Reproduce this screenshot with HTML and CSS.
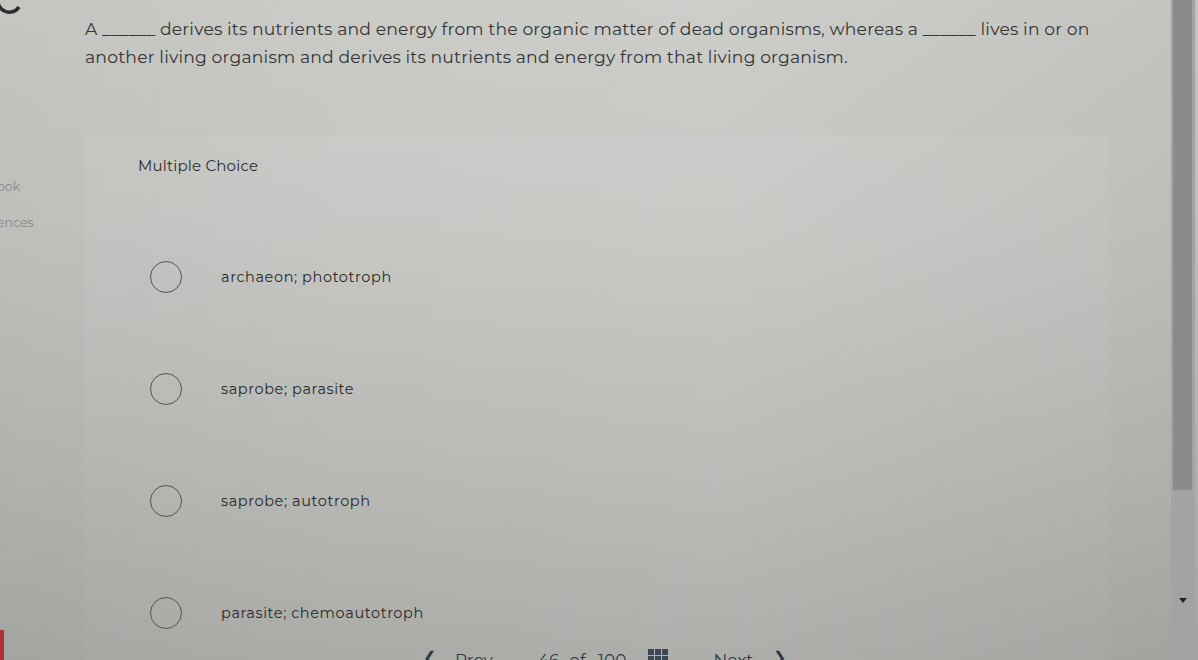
FILE: index.html
```
<!DOCTYPE html>
<html>
<head>
<meta charset="utf-8">
<link rel="stylesheet" href="styles.css">
</head>
<body>
<div class="screen">
  <aside class="sidebar">
    <svg class="logo-arc" width="26" height="20" viewBox="0 0 26 20"><path d="M1.5 -3 A11.5 11.5 0 0 0 22 7" fill="none" stroke="#2c2c2c" stroke-width="3.4"/></svg>
    <div class="side-link side-ook">ook</div>
    <div class="side-link side-ences">ences</div>
    <div class="side-red"></div>
  </aside>
  <main class="main">
    <p class="question">A <span class="blank">______</span> derives its nutrients and energy from the organic matter of dead organisms, whereas a <span class="blank">______</span> lives in or on another living organism and derives its nutrients and energy from that living organism.</p>
    <section class="panel">
      <div class="mc-label">Multiple Choice</div>
      <ul class="options">
        <li class="option"><span class="radio"></span><span class="opt-text">archaeon; phototroph</span></li>
        <li class="option"><span class="radio"></span><span class="opt-text">saprobe; parasite</span></li>
        <li class="option"><span class="radio"></span><span class="opt-text">saprobe; autotroph</span></li>
        <li class="option"><span class="radio"></span><span class="opt-text">parasite; chemoautotroph</span></li>
      </ul>
      <nav class="pager">
        <span class="chev">&#10094;</span>
        <span class="prev">Prev</span>
        <span class="count">46</span>
        <span class="of">of</span>
        <span class="total">100</span>
        <span class="grid-icon"><i></i><i></i><i></i><i></i><i></i><i></i></span>
        <span class="next">Next</span>
        <span class="chev chev-next">&#10095;</span>
      </nav>
    </section>
  </main>
  <div class="scrollbar">
    <div class="thumb"></div>
    <div class="arrow"></div>
  </div>
</div>
</body>
</html>
```
FILE: styles.css
```
html, body {
  margin: 0;
  padding: 0;
}
body {
  width: 1198px;
  height: 660px;
  overflow: hidden;
  font-family: "Montserrat", "Open Sans", "Liberation Sans", sans-serif;
  background: linear-gradient(180deg, #cbccc8 0%, #c4c5c1 35%, #b7b8b4 70%, #a9aaa6 100%);
}
.screen {
  display: flex;
  height: 660px;
  position: relative;
  background: linear-gradient(90deg, rgba(0,0,0,0.03) 0%, rgba(255,255,255,0.0) 30%, rgba(255,255,255,0.04) 60%, rgba(0,0,0,0.04) 100%);
}
.sidebar {
  width: 85px;
  flex: none;
  display: flex;
  flex-direction: column;
  position: relative;
}
.logo-arc {
  display: block;
  margin-left: -3px;
}
.side-link {
  font-size: 12.5px;
  color: #868783;
  margin-left: -3px;
}
.side-ook {
  margin-top: 159px;
}
.side-ences {
  margin-top: 21px;
}
.side-red {
  position: absolute;
  left: 0;
  top: 630px;
  width: 4px;
  height: 30px;
  background: #b0303a;
}
.main {
  flex: 1;
  display: flex;
  flex-direction: column;
  min-width: 0;
}
.question {
  margin: 15px 0 0 0;
  width: 1030px;
  font-size: 17.2px;
  line-height: 28px;
  color: #353535;
  letter-spacing: 0.2px;
  word-spacing: -0.2px;
}
.blank {
  letter-spacing: 0.3px;
  color: #333;
}
.panel {
  margin-top: 64px;
  width: 1025px;
  flex: 1;
  background: linear-gradient(180deg, rgba(255,255,255,0.05), rgba(255,255,255,0.02));
  padding-left: 53px;
  box-sizing: border-box;
  display: flex;
  flex-direction: column;
}
.mc-label {
  margin-top: 21px;
  font-size: 15px;
  color: #2e2e2e;
  letter-spacing: 0.2px;
}
.options {
  list-style: none;
  margin: 85px 0 0 0;
  padding: 0;
  display: flex;
  flex-direction: column;
  gap: 79px;
}
.option {
  display: flex;
  align-items: center;
  height: 33px;
}
.radio {
  width: 30px;
  height: 30px;
  border: 1.6px solid #555;
  border-radius: 50%;
  margin-left: 12px;
  flex: none;
}
.opt-text {
  margin-left: 39px;
  font-size: 14.5px;
  color: #2a2a2a;
  letter-spacing: 0.6px;
}
.pager {
  margin-top: 21px;
  display: flex;
  align-items: flex-start;
  font-size: 17px;
  color: #2f3a48;
  margin-left: 285px;
}
.chev { font-size: 16px; margin-top: -2px; }
.prev { margin-left: 19px; }
.count { margin-left: 45px; }
.of { margin-left: 10px; }
.total { margin-left: 12px; }
.grid-icon {
  margin-left: 22px;
  display: grid;
  grid-template-columns: repeat(3, 6px);
  gap: 1px;
  margin-top: -1px;
}
.grid-icon i {
  display: block;
  width: 6px;
  height: 6px;
  background: #3c4756;
}
.next { margin-left: 45px; }
.chev-next { margin-left: 20px; }
.scrollbar {
  width: 24px;
  margin-left: 63px;
  margin-right: 3px;
  flex: none;
  background: #a3a4a1;
  display: flex;
  flex-direction: column;
  align-items: center;
}
.thumb {
  width: 19px;
  height: 490px;
  background: #8b8c8a;
  margin-left: -2px;
}
.arrow {
  margin-top: 108px;
  width: 0;
  height: 0;
  border-left: 4px solid transparent;
  border-right: 4px solid transparent;
  border-top: 5px solid #222;
}
```
